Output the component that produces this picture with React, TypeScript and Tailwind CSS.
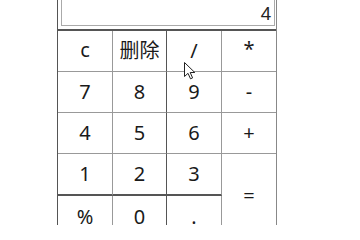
import React from "react";

type Cell = { label: string; cls?: string };

const font = { fontFamily: '"Noto Sans", "Noto Sans CJK SC", sans-serif' };

export default function App() {
  const base = "flex items-center justify-center border-r border-b border-[#999] text-[20px] text-[#1a1a1a] leading-none";
  const cells: Cell[] = [
    { label: "c", cls: "pb-[3px]" },
    { label: "删除", cls: "border-r-[#555]" },
    { label: "/" },
    { label: "*", cls: "border-r-0 text-[18px] pb-[4px]" },
    { label: "7" },
    { label: "8", cls: "border-r-[#555]" },
    { label: "9" },
    { label: "-", cls: "border-r-0 text-[18px]" },
    { label: "4" },
    { label: "5", cls: "border-r-[#555]" },
    { label: "6" },
    { label: "+", cls: "border-r-0 text-[18px]" },
    { label: "1", cls: "border-b-2 border-b-[#555]" },
    { label: "2", cls: "border-b-2 border-b-[#555] border-r-[#555]" },
    { label: "3", cls: "border-b-2 border-b-[#555]" },
    { label: "=", cls: "row-span-2 border-r-0 border-b-0 text-[18px]" },
    { label: "%" },
    { label: "0", cls: "border-r-[#555]" },
    { label: "." },
  ];
  return (
    <div className="relative w-[360px] h-[225px] overflow-hidden bg-white" style={font}>
      <div className="ml-[57px] -mt-[20px] w-[220px] border-l border-r border-l-[#555] border-r-[#888]">
        <div className="pl-[3px] pr-[1px] pb-[3px]">
          <div className="h-[46px] border border-[#aaa] flex items-end justify-end pr-[3px] pb-[3px] text-[18px] leading-none text-[#222]">
            4
          </div>
        </div>
        <div className="grid grid-cols-[55px_54px_55px_54px] grid-rows-[41px_41px_41px_42px_42px] border-t-2 border-[#555]">
          {cells.map((c, i) => (
            <div key={i} className={`${base} ${c.cls ?? ""}`}>
              {c.label}
            </div>
          ))}
        </div>
      </div>
      <svg className="absolute left-[184px] top-[62px]" width="12" height="18" viewBox="0 0 12 18">
        <path d="M0.5 0.5 L0.5 14.5 L4 11.3 L6.5 16.8 L8.6 15.9 L6.2 10.5 L10.8 10.5 Z" fill="white" stroke="#222" strokeWidth="1" strokeLinejoin="round" />
      </svg>
    </div>
  );
}
